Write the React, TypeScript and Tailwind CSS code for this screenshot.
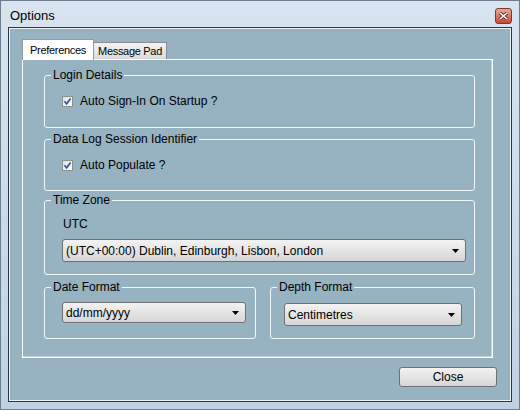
import * as React from "react"

function CheckBox() {
  return (
    <span className="flex size-[11px] shrink-0 items-center justify-center border border-[#8e8f8f] bg-linear-to-br from-[#d9e1ea] to-[#ffffff]">
      <svg width="9" height="9" viewBox="0 0 9 9">
        <path d="M1.5 4.2 L3.6 6.8 L7.6 1.4" fill="none" stroke="#3d5491" strokeWidth="1.7" />
      </svg>
    </span>
  )
}

function Combo({ value, className }: { value: string; className: string }) {
  return (
    <div
      className={`flex items-center justify-between rounded-[3px] border border-[#707070] bg-linear-to-b from-[#f3f3f3] to-[#d6d6d6] pl-[3px] pr-[6px] ${className}`}
    >
      <span className="leading-[14px]">{value}</span>
      <svg width="7" height="4" viewBox="0 0 7 4">
        <path d="M0 0h7L3.5 4z" fill="#000" />
      </svg>
    </div>
  )
}

function Group({
  title,
  className,
  children,
}: {
  title: string
  className: string
  children: React.ReactNode
}) {
  return (
    <fieldset className={`rounded-[3px] border border-[#f4f7f9] ${className}`}>
      <legend className="ml-[6px] px-[2px] leading-[14px]">{title}</legend>
      {children}
    </fieldset>
  )
}

export default function App() {
  return (
    <div className="flex h-[410px] w-[520px] flex-col border border-[#6f7e8c] bg-linear-to-b from-[#d8e4f0] to-[#bfd2e4] font-['Liberation_Sans',Arial,sans-serif] text-[12px] text-black">
      {/* title bar */}
      <div className="flex h-[26px] shrink-0 items-start justify-between pl-[9px] pr-[7px] pt-[7px]">
        <span className="text-[13px] leading-[16px]">Options</span>
        <div className="flex h-[16px] w-[17px] items-center justify-center rounded-[3px] border border-[#7a3a30] bg-linear-to-b from-[#e9a796] to-[#c44a36]">
          <svg width="9" height="8" viewBox="0 0 9 8">
            <path d="M1 1 L8 7 M8 1 L1 7" stroke="#4a2620" strokeWidth="3" />
            <path d="M1 1 L8 7 M8 1 L1 7" stroke="#ffffff" strokeWidth="1.6" />
          </svg>
        </div>
      </div>

      {/* client area */}
      <div className="mx-[7px] mb-[7px] flex-1 border border-[#2c3640]">
        <div className="flex h-full flex-col border border-[#eef3f6] bg-[#97b2c1]">
          <div className="ml-[12px] mt-[10px] w-[471px]">
            {/* tabs */}
            <div className="flex h-[20px] items-end text-[11px] tracking-[-0.3px]">
              <div className="relative z-10 -mb-px h-[21px] w-[72px] border border-b-0 border-[#8c9aa3] bg-white pt-[3px] text-center leading-[14px]">
                Preferences
              </div>
              <div className="h-[17px] w-[73px] border border-b-0 border-l-0 border-[#898c95] bg-linear-to-b from-[#f3f3f3] to-[#dadada] pt-[1px] text-center leading-[14px]">
                Message Pad
              </div>
            </div>

            {/* tab page */}
            <div className="flex h-[299px] flex-col border border-white pl-[21px] pr-[17px] pt-[8px] shadow-[inset_-1px_-1px_0_#c6d3da]">
              <Group title="Login Details" className="h-[60px]">
                <div className="mt-[12px] flex items-center gap-[7px] pl-[17px] leading-[14px]">
                  <CheckBox />
                  <span>Auto Sign-In On Startup ?</span>
                </div>
              </Group>

              <Group title="Data Log Session Identifier" className="mt-[4px] h-[59px]">
                <div className="mt-[12px] flex items-center gap-[7px] pl-[17px] leading-[14px]">
                  <CheckBox />
                  <span>Auto Populate ?</span>
                </div>
              </Group>

              <Group title="Time Zone" className="mt-[2px] h-[82px]">
                <div className="mt-[10px] pl-[18px] leading-[14px]">UTC</div>
                <div className="mt-[8px] pl-[17px]">
                  <Combo value="(UTC+00:00) Dublin, Edinburgh, Lisbon, London" className="h-[23px] w-[404px]" />
                </div>
              </Group>

              <div className="mt-[5px] flex gap-[14px]">
                <Group title="Date Format" className="h-[59px] w-[212px]">
                  <div className="mt-[8px] pl-[17px]">
                    <Combo value="dd/mm/yyyy" className="h-[21px] w-[184px]" />
                  </div>
                </Group>
                <Group title="Depth Format" className="h-[59px] w-[205px]">
                  <div className="mt-[9px] pl-[13px]">
                    <Combo value="Centimetres" className="h-[23px] w-[178px]" />
                  </div>
                </Group>
              </div>
            </div>
          </div>

          {/* footer */}
          <div className="mt-[9px] flex justify-end pr-[13px]">
            <button
              type="button"
              className="h-[20px] w-[98px] rounded-[3px] border border-[#707070] bg-linear-to-b from-[#f3f3f3] to-[#d6d6d6] text-center leading-[14px]"
            >
              Close
            </button>
          </div>
        </div>
      </div>
    </div>
  )
}
